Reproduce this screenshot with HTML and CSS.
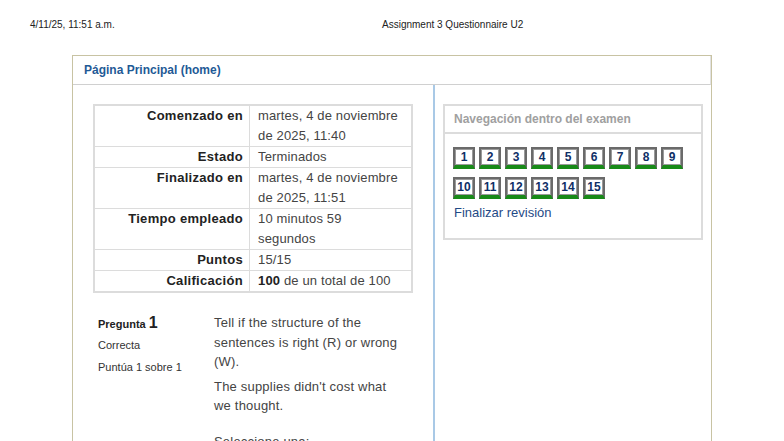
FILE: index.html
```html
<!DOCTYPE html>
<html lang="es">
<head>
<meta charset="utf-8">
<title>Assignment 3 Questionnaire U2</title>
<link rel="stylesheet" href="styles.css">
</head>
<body>
<div class="print-head">
  <span class="ph-date">4/11/25, 11:51 a.m.</span>
  <span class="ph-title">Assignment 3 Questionnaire U2</span>
</div>
<div class="frame">
  <div class="nav-bar"><a class="home-link">Página Principal (home)</a></div>
  <div class="cols">
    <div class="main">
      <table class="summary">
        <tr><th>Comenzado en</th><td>martes, 4 de noviembre de 2025, 11:40</td></tr>
        <tr><th>Estado</th><td>Terminados</td></tr>
        <tr><th>Finalizado en</th><td>martes, 4 de noviembre de 2025, 11:51</td></tr>
        <tr><th>Tiempo empleado</th><td>10 minutos 59 segundos</td></tr>
        <tr><th>Puntos</th><td>15/15</td></tr>
        <tr><th>Calificación</th><td><b>100</b> de un total de 100</td></tr>
      </table>
      <div class="question">
        <div class="qinfo">
          <div class="qno">Pregunta <span class="qnum">1</span></div>
          <div class="qstate">Correcta</div>
          <div class="qgrade">Puntúa 1 sobre 1</div>
        </div>
        <div class="qtext">
          <p>Tell if the structure of the sentences is right (R) or wrong (W).</p>
          <p>The supplies didn't cost what we thought.</p>
          <p class="sel">Seleccione una:</p>
        </div>
      </div>
    </div>
    <div class="divider"></div>
    <div class="side">
      <div class="block">
        <div class="block-head">Navegación dentro del examen</div>
        <div class="block-body">
          <div class="qbtns">
            <span class="qb">1</span><span class="qb">2</span><span class="qb">3</span><span class="qb">4</span><span class="qb">5</span><span class="qb">6</span><span class="qb">7</span><span class="qb">8</span><span class="qb">9</span>
            <span class="qb">10</span><span class="qb">11</span><span class="qb">12</span><span class="qb">13</span><span class="qb">14</span><span class="qb">15</span>
          </div>
          <a class="finish">Finalizar revisión</a>
        </div>
      </div>
    </div>
  </div>
</div>
</body>
</html>
```
FILE: styles.css
```css
html, body {
  margin: 0;
  padding: 0;
  background: #fff;
  font-family: "Liberation Sans", Arial, sans-serif;
  color: #333;
  overflow: hidden;
}
.print-head {
  display: flex;
  padding: 18px 0 0 30px;
  height: 13px;
  font-size: 10px;
  line-height: 13px;
  color: #222;
}
.ph-date { width: 352px; }
.frame {
  margin: 24px 0 0 72px;
  width: 638px;
  border-top: 1px solid #c8c3a3;
  border-left: 1px solid #c8c3a3;
  border-right: 1px solid #c8c3a3;
  height: 400px;
}
.nav-bar {
  height: 28px;
  border-bottom: 1px solid #d0d0d0;
  border-right: 1px solid #e2e2e2;
  display: flex;
  align-items: center;
  padding-left: 11px;
}
.home-link {
  color: #1f5a96;
  font-weight: bold;
  font-size: 12px;
}
.cols {
  display: flex;
  height: 400px;
}
.main {
  width: 320px;
  padding: 19px 20px 0 20px;
}
.divider {
  width: 2px;
  background: #a9c9e6;
}
.side {
  padding: 19px 0 0 8px;
}
.summary {
  width: 320px;
  border-collapse: collapse;
  border: 2px solid #dcdcdc;
  font-size: 13px;
  line-height: 20px;
}
.summary th, .summary td {
  border: 1px solid #dcdcdc;
  padding: 0;
  vertical-align: top;
}
.summary th {
  width: 148px;
  text-align: right;
  padding-right: 6px;
  color: #222;
  font-weight: bold;
  letter-spacing: 0.3px;
}
.summary td {
  padding-left: 8px;
  padding-right: 13px;
  color: #444;
  letter-spacing: 0.15px;
}
.summary td b { color: #222; }
.question {
  display: flex;
  margin-top: 20px;
}
.qinfo {
  width: 116px;
  padding-left: 5px;
  font-size: 11px;
  color: #333;
}
.qno {
  font-weight: bold;
  color: #222;
  height: 20px;
  line-height: 20px;
}
.qnum { font-size: 16px; }
.qstate, .qgrade {
  margin-top: 2px;
  line-height: 20px;
}
.qtext {
  width: 188px;
  font-size: 13px;
  line-height: 19.5px;
  color: #444;
  letter-spacing: 0.2px;
}
.qtext p { margin: 0 0 5px 0; }
.qtext p.sel { margin-top: 16px; }
.block {
  width: 256px;
  border: 2px solid #dcdcdc;
}
.block-head {
  height: 26px;
  line-height: 26px;
  padding-left: 9px;
  font-size: 12px;
  font-weight: bold;
  color: #a0a0a0;
  border-bottom: 2px solid #dcdcdc;
}
.block-body {
  padding: 13px 8px 16px 8px;
}
.qbtns {
  display: flex;
  flex-wrap: wrap;
  gap: 8px 4px;
  width: 240px;
}
.qb {
  box-sizing: border-box;
  width: 22px;
  height: 22px;
  border: 2px solid #6a6a6a;
  border-bottom: 4px solid #188a18;
  background: #fff;
  color: #0f2f66;
  font-weight: bold;
  font-size: 12px;
  line-height: 16px;
  text-align: center;
  box-shadow: inset 0 0 0 1px #9a9a9a;
}
.finish {
  display: block;
  margin-top: 5px;
  font-size: 13px;
  line-height: 18px;
  color: #1f4a86;
  padding-left: 1px;
}
```
